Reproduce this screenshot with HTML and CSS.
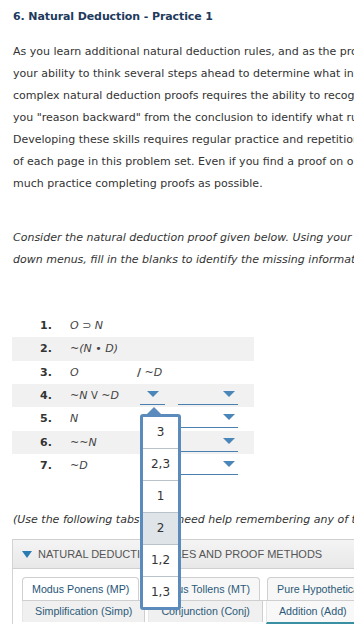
FILE: index.html
```html
<!DOCTYPE html>
<html>
<head>
<meta charset="utf-8">
<link rel="stylesheet" href="styles.css">
</head>
<body>
<div class="page">
  <h1 class="title">6. Natural Deduction - Practice 1</h1>
  <div class="intro">
    <div class="ln">As you learn additional natural deduction rules, and as the problems you encounter become more complex,</div>
    <div class="ln">your ability to think several steps ahead to determine what intermediate steps are needed becomes increasingly</div>
    <div class="ln">complex natural deduction proofs requires the ability to recognize patterns and to work strategically, as when</div>
    <div class="ln">you "reason backward" from the conclusion to identify what rules could produce it.</div>
    <div class="ln">Developing these skills requires regular practice and repetition, which is why you should work through all</div>
    <div class="ln">of each page in this problem set. Even if you find a proof on one page easy, you should still get as</div>
    <div class="ln">much practice completing proofs as possible.</div>
  </div>
  <div class="instr">
    <div class="ln">Consider the natural deduction proof given below. Using your knowledge of the rules and the drop-</div>
    <div class="ln">down menus, fill in the blanks to identify the missing information.</div>
  </div>

  <div class="proof">
    <div class="row">
      <span class="num">1.</span><span class="f">O ⊃ N</span>
    </div>
    <div class="row alt">
      <span class="num">2.</span><span class="f">~(N • D)</span>
    </div>
    <div class="row">
      <span class="num">3.</span><span class="f">O</span><span class="concl"><b>/</b> <i>~D</i></span>
    </div>
    <div class="row alt">
      <span class="num">4.</span><span class="f">~N <span class="up">V</span> ~D</span>
      <span class="dd dd-lines"><span class="arr"></span>
        <div class="popup">
          <div class="ptr"></div>
          <div class="opt">3</div>
          <div class="opt">2,3</div>
          <div class="opt">1</div>
          <div class="opt sel">2</div>
          <div class="opt">1,2</div>
          <div class="opt last">1,3</div>
        </div>
      </span>
      <span class="dd dd-rule"><span class="arr"></span></span>
    </div>
    <div class="row">
      <span class="num">5.</span><span class="f">N</span>
      <span class="dd dd-lines blank"></span>
      <span class="dd dd-rule"><span class="arr"></span></span>
    </div>
    <div class="row alt">
      <span class="num">6.</span><span class="f">~~N</span>
      <span class="dd dd-lines blank"></span>
      <span class="dd dd-rule"><span class="arr"></span></span>
    </div>
    <div class="row">
      <span class="num">7.</span><span class="f">~D</span>
      <span class="dd dd-lines blank"></span>
      <span class="dd dd-rule"><span class="arr"></span></span>
    </div>
  </div>

  <div class="note">(Use the following tabs if you need help remembering any of the rules.)</div>

  <div class="acc">
    <div class="acc-head"><span class="tri"></span><span class="acc-title">NATURAL DEDUCTION RULES AND PROOF METHODS</span></div>
    <div class="acc-body">
      <div class="tabrow r1">
        <span class="tab active">Modus Ponens (MP)</span>
        <span class="tab">Modus Tollens (MT)</span>
        <span class="tab">Pure Hypothetical Syllogism (HS)</span>
      </div>
      <div class="tabrow r2">
        <span class="tab2">Simplification (Simp)</span>
        <span class="tab2">Conjunction (Conj)</span>
        <span class="tab2 lit">Addition (Add)</span>
        <span class="tab2">Disjunctive Syllogism (DS)</span>
      </div>
    </div>
  </div>
</div>
</body>
</html>
```
FILE: styles.css
```css
html, body {
  margin: 0;
  padding: 0;
  background: #fff;
  overflow: hidden;
}
body {
  width: 354px;
  height: 625px;
}
.page {
  width: 520px;
  padding-left: 13px;
  font-family: "DejaVu Sans", Verdana, sans-serif;
  font-size: 11px;
  color: #333;
}
.title {
  margin: 6px 0 0;
  font-size: 11px;
  letter-spacing: -0.1px;
  line-height: 22px;
  font-weight: bold;
  color: #1e3a5c;
}
.ln {
  white-space: nowrap;
  line-height: 22px;
}
.intro {
  margin-top: 13px;
}
.instr {
  margin-top: 32px;
  font-style: italic;
}
.proof {
  margin-top: 43px;
  margin-left: -1px;
  width: 242px;
}
.row {
  height: 23.33px;
  display: flex;
  align-items: center;
  position: relative;
}
.row.alt {
  background: #f1f1f1;
}
.num {
  width: 30px;
  padding-left: 28px;
  font-weight: bold;
  color: #333;
}
.f {
  width: 67px;
  font-style: italic;
  color: #444;
}
.f .up {
  font-style: normal;
  font-size: 10px;
}
.concl {
  color: #444;
}
.concl b {
  font-weight: bold;
}
.dd {
  align-self: flex-start;
  height: 20px;
  border-bottom: 1px solid #4a7fb0;
  position: relative;
  display: flex;
  align-items: center;
}
.dd-lines {
  width: 25px;
  margin-left: 3px;
  justify-content: center;
}
.dd-lines.blank {
  border-bottom-color: transparent;
}
.dd-rule {
  width: 60px;
  margin-left: 13px;
  justify-content: flex-end;
}
.arr {
  width: 0;
  height: 0;
  border-left: 6px solid transparent;
  border-right: 6px solid transparent;
  border-top: 6px solid #4a86b8;
}
.dd-rule .arr {
  margin-right: 3px;
}
.popup {
  position: absolute;
  left: 0;
  top: 30px;
  width: 35px;
  border: 3px solid #5b8bbd;
  border-radius: 3px;
  background: #fff;
  z-index: 5;
}
.ptr {
  position: absolute;
  left: 4px;
  top: -10px;
  width: 0;
  height: 0;
  border-left: 7px solid transparent;
  border-right: 7px solid transparent;
  border-bottom: 7px solid #5b8bbd;
}
.opt {
  height: 31px;
  line-height: 31px;
  text-align: center;
  border-bottom: 1px solid #b9c1c9;
  color: #333;
  font-size: 12px;
}
.opt.last {
  border-bottom: none;
  height: 30px;
  line-height: 30px;
}
.opt.sel {
  background: #dfe4e8;
}
.note {
  margin-top: 32px;
  line-height: 22px;
  font-style: italic;
  white-space: nowrap;
}
.acc {
  margin-top: 8px;
  margin-left: -1px;
  border-left: 1px solid #d3d3d3;
}
.acc-head {
  height: 28px;
  border: 1px solid #cfcfcf;
  border-left: none;
  background: linear-gradient(#f4f4f4, #e8e8e8);
  display: flex;
  align-items: center;
  padding-left: 9px;
}
.tri {
  width: 0;
  height: 0;
  border-left: 5px solid transparent;
  border-right: 5px solid transparent;
  border-top: 7px solid #2b7bb3;
  margin-right: 6px;
}
.acc-title {
  font-family: "Liberation Sans", Arial, sans-serif;
  font-size: 11px;
  color: #555;
}
.acc-body {
  padding: 8px 0 0 9px;
  font-family: "Liberation Sans", Arial, sans-serif;
  font-size: 10.7px;
}
.tabrow {
  display: flex;
  white-space: nowrap;
}
.r1 {
  gap: 7px;
}
.tab {
  height: 22px;
  line-height: 22px;
  padding: 0 9px;
  border: 1px solid #cfcfcf;
  border-bottom: none;
  border-radius: 4px 4px 0 0;
  background: #f7f7f7;
  color: #2c5a78;
}
.tab.active {
  background: #fff;
  color: #1f5478;
}
.r2 {
  border-top: 1px solid #cfcfcf;
  gap: 3px;
}
.tab2 {
  height: 21px;
  line-height: 21px;
  padding: 0 12px;
  border-right: 1px solid #cfcfcf;
  border-left: 1px solid #e6e6e6;
  background: #f0f0f0;
  color: #2c5a78;
}
.tab2.lit {
  background: #f8f8f8;
  border-bottom: 2px solid #3b8fa3;
}
```
